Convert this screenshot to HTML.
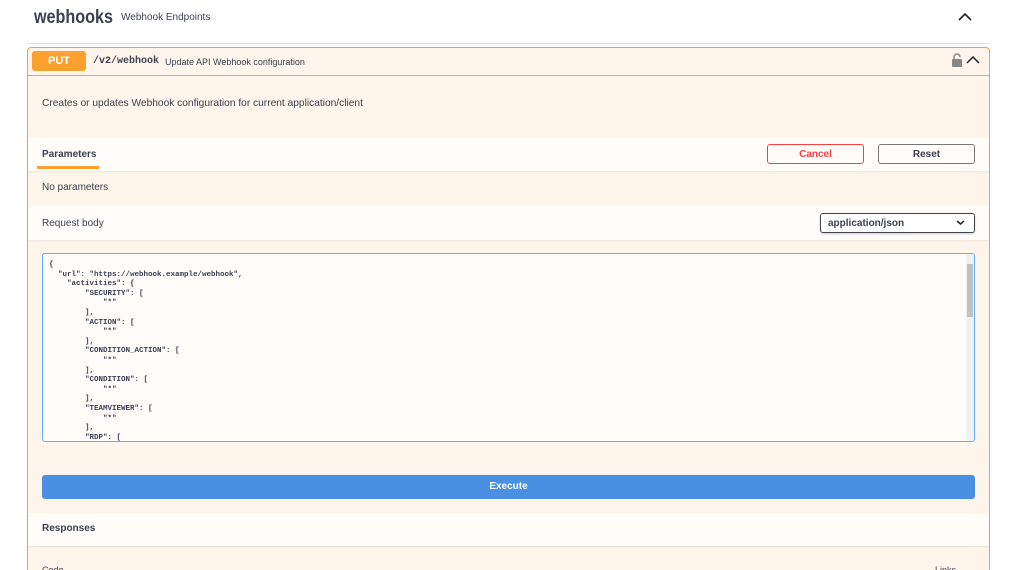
<!DOCTYPE html>
<html><head><meta charset="utf-8"><style>
*{box-sizing:border-box;margin:0;padding:0}
html,body{width:1024px;height:570px;overflow:hidden}
body{background:#fff;font-family:"Liberation Sans",sans-serif;color:#3b4151;position:relative}
.abs{position:absolute}
.mono{font-family:"Liberation Mono",monospace}
</style></head><body>
<div class="abs" style="left:34px;top:7px;font-size:19px;font-weight:bold;color:#3b4151;transform:scaleX(0.85);transform-origin:0 0">webhooks</div>
<div class="abs" style="left:121px;top:12px;font-size:10px">Webhook Endpoints</div>
<svg class="abs" style="left:957px;top:11px" width="16" height="12" viewBox="0 0 16 12"><path d="M2 9 L8 3 L14 9" fill="none" stroke="#222" stroke-width="1.6"/></svg>
<div class="abs" style="left:27px;top:43px;width:963px;height:1px;background:#d8dde7"></div>

<div class="abs" style="left:27px;top:47px;width:963px;height:530px;border:1px solid #fca130;border-radius:4px;background:#fff5ea"></div>
<div class="abs" style="left:28px;top:75px;width:961px;height:1px;background:#fca130"></div>
<div class="abs" style="left:32px;top:51px;width:54px;height:20px;background:#fca130;border-radius:3px;color:#fff;font-weight:bold;font-size:11px;text-align:center;line-height:20px">PUT</div>
<div class="abs mono" style="left:93px;top:56px;font-size:10px;font-weight:bold;color:#3b4151">/v2/webhook</div>
<div class="abs" style="left:165px;top:57px;font-size:9px">Update API Webhook configuration</div>
<svg class="abs" style="left:951px;top:53px" width="12" height="14" viewBox="0 0 12 14"><path d="M3 6V4a3 3 0 0 1 6 0" fill="none" stroke="#888" stroke-width="1.5"/><rect x="1" y="6" width="10" height="8" rx="1" fill="#888"/></svg>
<svg class="abs" style="left:966px;top:55px" width="14" height="10" viewBox="0 0 14 10"><path d="M1 8 L7 2 L13 8" fill="none" stroke="#222" stroke-width="1.5"/></svg>
<div class="abs" style="left:42px;top:98px;font-size:10.2px">Creates or updates Webhook configuration for current application/client</div>

<div class="abs" style="left:28px;top:137px;width:961px;height:34px;background:#fffcfa;box-shadow:0 1px 2px rgba(0,0,0,.08)"></div>
<div class="abs" style="left:42px;top:149px;font-size:10px;font-weight:bold">Parameters</div>
<div class="abs" style="left:37px;top:166px;width:62px;height:3px;background:#fca130"></div>
<div class="abs" style="left:767px;top:144px;width:97px;height:20px;border:1px solid #f93e3e;border-radius:3px;color:#f93e3e;font-size:10px;font-weight:bold;text-align:center;line-height:19px">Cancel</div>
<div class="abs" style="left:878px;top:144px;width:97px;height:20px;border:1px solid #777;border-radius:3px;color:#3b4151;font-size:10px;font-weight:bold;text-align:center;line-height:19px;background:#fffcfa">Reset</div>
<div class="abs" style="left:42px;top:182px;font-size:10px">No parameters</div>

<div class="abs" style="left:28px;top:206px;width:961px;height:34px;background:#fffcfa;box-shadow:0 1px 2px rgba(0,0,0,.08)"></div>
<div class="abs" style="left:42px;top:218px;font-size:10px">Request body</div>
<div class="abs" style="left:820px;top:213px;width:155px;height:20px;border:1px solid #41444e;border-radius:3px;font-size:10px;font-weight:bold;padding-left:7px;line-height:19px;background:#fff;box-shadow:0 1px 2px rgba(0,0,0,.2)">application/json</div>
<svg class="abs" style="left:956px;top:219px" width="9" height="7" viewBox="0 0 9 7"><path d="M1 2 L4.5 5 L8 2" fill="none" stroke="#222" stroke-width="1.5"/></svg>

<div class="abs" style="left:42px;top:253px;width:933px;height:189px;border:1px solid #61affe;border-radius:3px;background:#fffcfa;overflow:hidden">
<pre class="mono" style="font-size:7.5px;line-height:9.6px;color:#3b4151;font-weight:bold;padding:7px 0 0 6px">{
  "url": "https://webhook.example/webhook",
    "activities": {
        "SECURITY": [
            "*"
        ],
        "ACTION": [
            "*"
        ],
        "CONDITION_ACTION": [
            "*"
        ],
        "CONDITION": [
            "*"
        ],
        "TEAMVIEWER": [
            "*"
        ],
        "RDP": [
            "*"</pre>
<div class="abs" style="right:0;top:0;width:8px;height:187px;background:#f1f1f1"></div>
<div class="abs" style="right:1px;top:10px;width:6px;height:53px;background:#c1c1c1"></div>
</div>

<div class="abs" style="left:42px;top:475px;width:933px;height:24px;background:#4990e2;border-radius:3px;color:#fff;font-size:10px;font-weight:bold;text-align:center;line-height:24px">Execute</div>
<div class="abs" style="left:28px;top:513px;width:961px;height:33px;background:#fffcfa;box-shadow:0 1px 2px rgba(0,0,0,.1)"></div>
<div class="abs" style="left:42px;top:523px;font-size:10px;font-weight:bold">Responses</div>
<div class="abs" style="left:42px;top:565px;font-size:9px">Code</div>
<div class="abs" style="left:935px;top:565px;font-size:9px">Links</div>
</body></html>
